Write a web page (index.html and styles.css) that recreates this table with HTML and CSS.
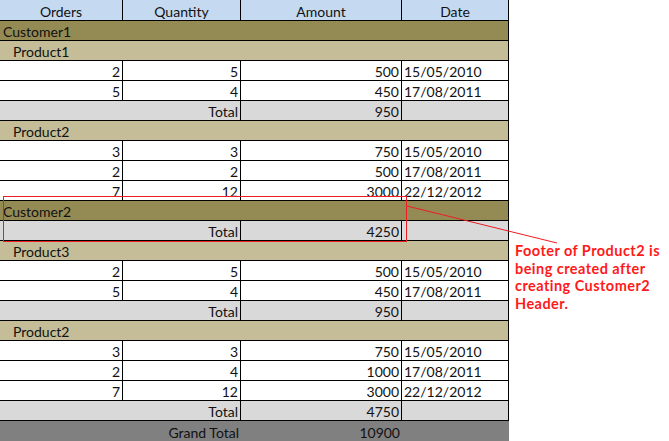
FILE: index.html
```html
<!DOCTYPE html>
<html>
<head>
<meta charset="utf-8">
<link rel="stylesheet" href="styles.css">
</head>
<body>
<div class="page">
  <div class="sheet">
    <div class="row head"><div class="c">Orders</div><div class="c">Quantity</div><div class="c">Amount</div><div class="c">Date</div></div>
    <div class="row cust"><div class="c all">Customer1</div></div>
    <div class="row prod"><div class="c all">Product1</div></div>
    <div class="row data"><div class="c n">2</div><div class="c n">5</div><div class="c n">500</div><div class="c d">15/05/2010</div></div>
    <div class="row data"><div class="c n">5</div><div class="c n">4</div><div class="c n">450</div><div class="c d">17/08/2011</div></div>
    <div class="row total"><div class="c n two">Total</div><div class="c n">950</div><div class="c"></div></div>
    <div class="row prod"><div class="c all">Product2</div></div>
    <div class="row data"><div class="c n">3</div><div class="c n">3</div><div class="c n">750</div><div class="c d">15/05/2010</div></div>
    <div class="row data"><div class="c n">2</div><div class="c n">2</div><div class="c n">500</div><div class="c d">17/08/2011</div></div>
    <div class="row data"><div class="c n">7</div><div class="c n">12</div><div class="c n">3000</div><div class="c d">22/12/2012</div></div>
    <div class="row cust"><div class="c all">Customer2</div></div>
    <div class="row total"><div class="c n two">Total</div><div class="c n">4250</div><div class="c"></div></div>
    <div class="row prod"><div class="c all">Product3</div></div>
    <div class="row data"><div class="c n">2</div><div class="c n">5</div><div class="c n">500</div><div class="c d">15/05/2010</div></div>
    <div class="row data"><div class="c n">5</div><div class="c n">4</div><div class="c n">450</div><div class="c d">17/08/2011</div></div>
    <div class="row total"><div class="c n two">Total</div><div class="c n">950</div><div class="c"></div></div>
    <div class="row prod"><div class="c all">Product2</div></div>
    <div class="row data"><div class="c n">3</div><div class="c n">3</div><div class="c n">750</div><div class="c d">15/05/2010</div></div>
    <div class="row data"><div class="c n">2</div><div class="c n">4</div><div class="c n">1000</div><div class="c d">17/08/2011</div></div>
    <div class="row data"><div class="c n">7</div><div class="c n">12</div><div class="c n">3000</div><div class="c d">22/12/2012</div></div>
    <div class="row total"><div class="c n two">Total</div><div class="c n">4750</div><div class="c"></div></div>
    <div class="row grand"><div class="c n two">Grand Total</div><div class="c n">10900</div><div class="c"></div></div>
  </div>
  <div class="mark-box"></div>
  <svg class="mark-line" width="669" height="441" viewBox="0 0 669 441"><line x1="407" y1="206" x2="557" y2="243" stroke="#ee1c24" stroke-width="1"/></svg>
  <div class="note">Footer of Product2 is<br>being created after<br>creating Customer2<br>Header.</div>
</div>
</body>
</html>
```
FILE: styles.css
```css
html, body {
  margin: 0;
  padding: 0;
  background: #ffffff;
}
.page {
  position: relative;
  width: 669px;
  height: 441px;
  overflow: hidden;
  font-family: Lato, "Noto Sans", sans-serif;
  font-size: 14px;
  color: #111;
}
.sheet {
  width: 509px;
  display: flex;
  flex-direction: column;
}
.row {
  display: grid;
  grid-template-columns: 123px 118px 161px 107px;
  height: 20px;
  box-sizing: border-box;
  border-bottom: 1px solid #000;
}
.row.head {
  height: 21px;
  background: #c5d9f1;
}
.c {
  box-sizing: border-box;
  border-right: 1px solid #000;
  line-height: 22px;
  white-space: nowrap;
  overflow: hidden;
}
.head .c {
  text-align: center;
  line-height: 23px;
}
.all {
  grid-column: 1 / 5;
}
.two {
  grid-column: 1 / 3;
}
.n {
  text-align: right;
  padding-right: 2px;
}
.d {
  padding-left: 2px;
}
.cust {
  background: #948a54;
}
.cust .c {
  padding-left: 3px;
}
.prod {
  background: #c4bd97;
}
.prod .c {
  padding-left: 13px;
}
.data {
  background: #ffffff;
}
.total {
  background: #d9d9d9;
}
.grand {
  background: #808080;
  border-bottom: none;
  height: 21px;
}
.grand .c {
  border-right: none;
  line-height: 23px;
}
.mark-box {
  position: absolute;
  left: 3px;
  top: 196px;
  width: 404px;
  height: 46px;
  border: 1px solid #ee1c24;
  box-sizing: border-box;
}
.mark-line {
  position: absolute;
  left: 0;
  top: 0;
}
.note {
  position: absolute;
  left: 515px;
  top: 242px;
  color: #ff1a1a;
  font-weight: bold;
  font-size: 14.5px;
  line-height: 17.5px;
  letter-spacing: 0.45px;
  white-space: nowrap;
}
```
